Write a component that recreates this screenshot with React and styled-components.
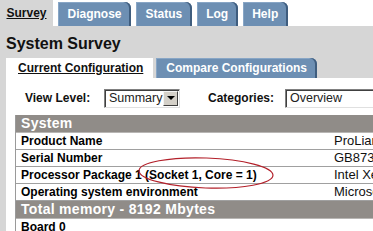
import React from 'react';
import styled, { createGlobalStyle } from 'styled-components';

const GlobalStyle = createGlobalStyle`
  html, body {
    margin: 0;
    padding: 0;
    background: #ffffff;
    overflow: hidden;
  }
  body {
    font-family: "Liberation Sans", Arial, sans-serif;
  }
`;

const Page = styled.div`
  width: 373px;
  height: 231px;
  overflow: hidden;
  display: flex;
  flex-direction: column;
`;

const TopTabs = styled.div`
  display: flex;
  align-items: flex-end;
  gap: 5px;
  height: 26px;
  flex-shrink: 0;
`;

const Tab = styled.div`
  display: flex;
  align-items: center;
  justify-content: center;
  box-sizing: border-box;
  height: ${p => (p.active ? '26px' : '24px')};
  padding: ${p => (p.active ? '0 6px' : '0 9.5px')};
  width: ${p => (p.width ? `${p.width}px` : 'auto')};
  font-size: 12px;
  font-weight: bold;
  color: ${p => (p.active ? '#111' : '#fff')};
  text-decoration: ${p => (p.active ? 'underline' : 'none')};
  background: ${p => (p.active ? '#d6d6d6' : '#6d8fb3')};
  border-top-right-radius: ${p => (p.active ? '0' : '6px')};
  box-shadow: ${p => (p.active ? 'none' : 'inset -2px 0 0 #3f5d7e, inset 1px 1px 0 #88a6c6')};
  white-space: nowrap;
`;

const Main = styled.div`
  flex: 1;
  background: #d6d6d6;
  padding: 8px 0 0 6px;
  display: flex;
  flex-direction: column;
`;

const Title = styled.h1`
  margin: 0 0 4px 0;
  font-size: 16px;
  line-height: 20px;
  font-weight: bold;
  color: #111;
`;

const SubTabs = styled(TopTabs)`
  height: 20px;
  gap: 3px;
`;

const SubTab = styled(Tab)`
  height: 20px;
  padding: ${p => (p.active ? '0 10px 0 12px' : '0 10px')};
  background: ${p => (p.active ? '#ffffff' : '#6d8fb3')};
`;

const Panel = styled.div`
  flex: 1;
  background: #ffffff;
  padding: 10px 0 0 9px;
  display: flex;
  flex-direction: column;
`;

const FilterRow = styled.div`
  display: flex;
  align-items: center;
  height: 20px;
  padding-left: 10px;
`;

const FilterLabel = styled.span`
  font-size: 12px;
  font-weight: bold;
  color: #111;
  width: ${p => p.width}px;
  flex-shrink: 0;
  white-space: nowrap;
`;

const Select = styled.div`
  box-sizing: border-box;
  display: flex;
  align-items: center;
  justify-content: space-between;
  width: ${p => p.width}px;
  height: 19px;
  margin-right: ${p => p.gap || 0}px;
  flex-shrink: 0;
  border-top: 1px solid #808080;
  border-left: 1px solid #808080;
  border-right: 1px solid #e0e0e0;
  border-bottom: 1px solid #e0e0e0;
  box-shadow: inset 1px 1px 0 #404040;
  background: #fff;
  padding: 1px 1px 1px 4px;
  font-size: 12.5px;
  color: #222;
  white-space: nowrap;
`;

const SelectButton = styled.div`
  box-sizing: border-box;
  width: 15px;
  height: 15px;
  flex-shrink: 0;
  background: #d4d0c8;
  border-top: 1px solid #f4f4f4;
  border-left: 1px solid #f4f4f4;
  border-right: 1px solid #404040;
  border-bottom: 1px solid #404040;
  display: flex;
  align-items: center;
  justify-content: center;
  &::after {
    content: '';
    border-left: 4px solid transparent;
    border-right: 4px solid transparent;
    border-top: 4px solid #000;
  }
`;

const Table = styled.div`
  position: relative;
  margin-top: 7px;
  border-left: 1px solid #9a9a9a;
  display: flex;
  flex-direction: column;
`;

const SectionHead = styled.div`
  height: 17px;
  line-height: 17px;
  background: #908c88;
  color: #ffffff;
  font-size: 14px;
  font-weight: bold;
  padding-left: 5px;
  letter-spacing: 0.3px;
  white-space: nowrap;
  border-bottom: 1px solid #b8b6b4;
`;

const Row = styled.div`
  display: grid;
  grid-template-columns: 318px 1fr;
  height: 16px;
  line-height: 16px;
  border-bottom: 1px solid #a0a0a0;
  white-space: nowrap;
  overflow: hidden;
`;

const Label = styled.div`
  font-size: 12px;
  font-weight: bold;
  color: #000;
  padding-left: 5px;
  overflow: hidden;
`;

const Value = styled.div`
  font-size: 13px;
  color: #111;
`;

const PlainRow = styled.div`
  font-size: 12px;
  font-weight: bold;
  color: #000;
  padding-left: 5px;
  line-height: 16px;
`;

const Annotation = styled.svg`
  position: absolute;
  left: 122px;
  top: 42px;
  overflow: visible;
  pointer-events: none;
`;

const rows = [
  ['Product Name', 'ProLiant'],
  ['Serial Number', 'GB8733'],
  ['Processor Package 1 (Socket 1, Core = 1)', 'Intel Xeon'],
  ['Operating system environment', 'Microsoft'],
];

export default function App() {
  return (
    <Page>
      <GlobalStyle />
      <TopTabs>
        <Tab active width={53}>Survey</Tab>
        <Tab>Diagnose</Tab>
        <Tab>Status</Tab>
        <Tab>Log</Tab>
        <Tab>Help</Tab>
      </TopTabs>
      <Main>
        <Title>System Survey</Title>
        <SubTabs>
          <SubTab active>Current Configuration</SubTab>
          <SubTab>Compare Configurations</SubTab>
        </SubTabs>
        <Panel>
          <FilterRow>
            <FilterLabel width={79}>View Level:</FilterLabel>
            <Select width={76} gap={28}>
              Summary
              <SelectButton />
            </Select>
            <FilterLabel width={77}>Categories:</FilterLabel>
            <Select width={160}>Overview</Select>
          </FilterRow>
          <Table>
            <SectionHead>System</SectionHead>
            {rows.map(([label, value]) => (
              <Row key={label}>
                <Label>{label}</Label>
                <Value>{value}</Value>
              </Row>
            ))}
            <SectionHead>Total memory - 8192 Mbytes</SectionHead>
            <PlainRow>Board 0</PlainRow>
            <Annotation width="136" height="32" viewBox="0 0 136 32">
              <ellipse
                cx="68"
                cy="16"
                rx="67"
                ry="15"
                fill="none"
                stroke="#b3202a"
                strokeWidth="1.2"
                transform="rotate(2 68 16)"
              />
            </Annotation>
          </Table>
        </Panel>
      </Main>
    </Page>
  );
}
